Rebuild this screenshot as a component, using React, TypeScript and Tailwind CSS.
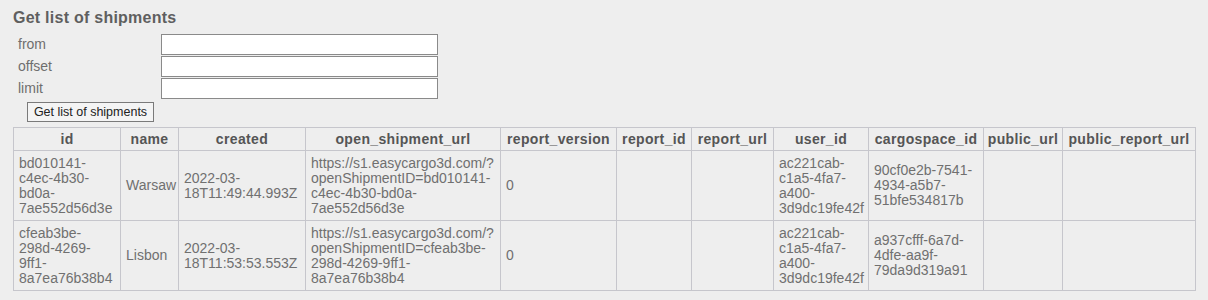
import React from "react";

const cols: [string, string][] = [
  ["id", "w-[107px]"],
  ["name", "w-[58px]"],
  ["created", "w-[127px]"],
  ["open_shipment_url", "w-[195px]"],
  ["report_version", "w-[116px]"],
  ["report_id", "w-[75px]"],
  ["report_url", "w-[82px]"],
  ["user_id", "w-[95px]"],
  ["cargospace_id", "w-[115px]"],
  ["public_url", "w-[79px]"],
  ["public_report_url", "w-[133px]"],
];

const rows: string[][][] = [
  [
    ["bd010141-", "c4ec-4b30-", "bd0a-", "7ae552d56d3e"],
    ["Warsaw"],
    ["2022-03-", "18T11:49:44.993Z"],
    ["https://s1.easycargo3d.com/?", "openShipmentID=bd010141-", "c4ec-4b30-bd0a-", "7ae552d56d3e"],
    ["0"],
    [],
    [],
    ["ac221cab-", "c1a5-4fa7-", "a400-", "3d9dc19fe42f"],
    ["90cf0e2b-7541-", "4934-a5b7-", "51bfe534817b"],
    [],
    [],
  ],
  [
    ["cfeab3be-", "298d-4269-", "9ff1-", "8a7ea76b38b4"],
    ["Lisbon"],
    ["2022-03-", "18T11:53:53.553Z"],
    ["https://s1.easycargo3d.com/?", "openShipmentID=cfeab3be-", "298d-4269-9ff1-", "8a7ea76b38b4"],
    ["0"],
    [],
    [],
    ["ac221cab-", "c1a5-4fa7-", "a400-", "3d9dc19fe42f"],
    ["a937cfff-6a7d-", "4dfe-aa9f-", "79da9d319a91"],
    [],
    [],
  ],
];

export default function App() {
  return (
    <div className="min-h-[300px] bg-[#eeeeee] px-[13px] pt-[9px] pb-2 text-[14px] leading-[15px] text-[#6e6e6e] [font-family:'Liberation_Sans',Arial,sans-serif]">
      <h2 className="text-[16px] leading-[18px] font-bold tracking-[0.25px] text-[#5f5f5f]">Get list of shipments</h2>
      <div className="mt-[7px] flex flex-col gap-px pl-[5px]">
        {["from", "offset", "limit"].map((l) => (
          <div key={l} className="flex items-center">
            <label className="w-[143px] text-[14px] text-[#6e6e6e]">{l}</label>
            <input className="h-[21px] w-[277px] border border-[#8a8a8a] bg-white outline-none" />
          </div>
        ))}
      </div>
      <div className="mt-[3px] pl-[14px]">
        <button className="h-[20px] w-[127px] border border-[#7a7a7a] bg-[#f4f4f4] text-[12.5px] leading-[14px] text-[#222]">
          Get list of shipments
        </button>
      </div>
      <table className="mt-[5px] w-[1182px] table-fixed border-collapse">
        <thead>
          <tr>
            {cols.map(([c, w]) => (
              <th
                key={c}
                className={`${w} h-[23px] border border-[#c6c6cc] px-[2px] py-0 text-center text-[14px] font-bold tracking-[0.35px] text-[#555]`}
              >
                {c}
              </th>
            ))}
          </tr>
        </thead>
        <tbody>
          {rows.map((r, i) => (
            <tr key={i}>
              {r.map((cell, j) => (
                <td
                  key={j}
                  className="h-[70px] border border-[#c6c6cc] px-[5px] py-0 align-middle whitespace-nowrap overflow-hidden text-[#707070]"
                >
                  {cell.map((line, k) => (
                    <div key={k}>{line}</div>
                  ))}
                </td>
              ))}
            </tr>
          ))}
        </tbody>
      </table>
    </div>
  );
}
